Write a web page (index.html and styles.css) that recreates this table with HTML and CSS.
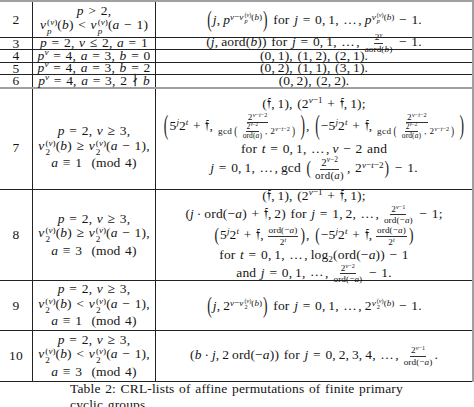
FILE: index.html
```html
<!DOCTYPE html>
<html>
<head>
<meta charset="utf-8">
<link rel="stylesheet" href="styles.css">
</head>
<body>
<div class="table">
  <div class="row r2">
    <div class="num">2</div>
    <div class="cond">
      <div class="ln"><i>p</i> &gt; 2,</div>
      <div class="ln"><i>ν</i><span class="st"><span>(<i>v</i>)</span><span><i>p</i></span></span>(<i>b</i>) &lt; <i>ν</i><span class="st"><span>(<i>v</i>)</span><span><i>p</i></span></span>(<i>a</i> − 1)</div>
    </div>
    <div class="list">
      <div class="ln"><span class="bp b18">(</span><i>j</i>,&thinsp;<i>p</i><span class="sp"><i>v</i>−<i>ν</i><span class="st"><span>(<i>v</i>)</span><span><i>p</i></span></span>(<i>b</i>)</span><span class="bp b18">)</span> for <i>j</i> = 0,&thinsp;1,&thinsp;<span class="el">…</span>,&thinsp;<i>p</i><span class="sp"><i>ν</i><span class="st"><span>(<i>v</i>)</span><span><i>p</i></span></span>(<i>b</i>)</span> − 1.</div>
    </div>
  </div>
  <div class="row r3 sm">
    <div class="num">3</div>
    <div class="cond"><div class="ln"><i>p</i> = 2, <i>v</i> ≤ 2, <i>a</i> = 1</div></div>
    <div class="list"><div class="ln">(<i>j</i>,&thinsp;aord(<i>b</i>)) for <i>j</i> = 0,&thinsp;1,&thinsp;<span class="el">…</span>,&thinsp;<span class="fr"><span class="n">2<span class="sp"><i>v</i></span></span><span class="d">aord(<i>b</i>)</span></span> − 1.</div></div>
  </div>
  <div class="row r4 sm">
    <div class="num">4</div>
    <div class="cond"><div class="ln"><i>p</i><span class="sp"><i>v</i></span> = 4, <i>a</i> = 3, <i>b</i> = 0</div></div>
    <div class="list"><div class="ln">(0,&thinsp;1), (1,&thinsp;2), (2,&thinsp;1).</div></div>
  </div>
  <div class="row r5 sm">
    <div class="num">5</div>
    <div class="cond"><div class="ln"><i>p</i><span class="sp"><i>v</i></span> = 4, <i>a</i> = 3, <i>b</i> = 2</div></div>
    <div class="list"><div class="ln">(0,&thinsp;2), (1,&thinsp;1), (3,&thinsp;1).</div></div>
  </div>
  <div class="row r6 sm">
    <div class="num">6</div>
    <div class="cond"><div class="ln"><i>p</i><span class="sp"><i>v</i></span> = 4, <i>a</i> = 3, 2 ∤ <i>b</i></div></div>
    <div class="list"><div class="ln">(0,&thinsp;2), (2,&thinsp;2).</div></div>
  </div>
  <div class="row r7">
    <div class="num shift">7</div>
    <div class="cond shift">
      <div class="ln"><i>p</i> = 2, <i>v</i> ≥ 3,</div>
      <div class="ln"><i>ν</i><span class="st"><span>(<i>v</i>)</span><span>2</span></span>(<i>b</i>) ≥ <i>ν</i><span class="st"><span>(<i>v</i>)</span><span>2</span></span>(<i>a</i> − 1),</div>
      <div class="ln"><i>a</i> ≡ 1 &nbsp;(mod 4)</div>
    </div>
    <div class="list">
      <div class="ln l14">(𝔣,&thinsp;1), (2<span class="sp"><i>v</i>−1</span> + 𝔣,&thinsp;1);</div>
      <div class="ln l30"><span class="bp b20">(</span>5<span class="sp"><i>j</i></span>2<span class="sp"><i>t</i></span> + 𝔣,&thinsp;<span class="fr wide"><span class="n">2<span class="sp"><i>v</i>−<i>t</i>−2</span></span><span class="d">gcd<span class="bp b13">(</span><span class="fr in"><span class="n">2<span class="sp"><i>v</i>−2</span></span><span class="d">ord(<i>a</i>)</span></span>,&nbsp;2<span class="sp"><i>v</i>−<i>t</i>−2</span><span class="bp b13">)</span></span></span><span class="bp b20">)</span>, <span class="bp b20">(</span>−5<span class="sp"><i>j</i></span>2<span class="sp"><i>t</i></span> + 𝔣,&thinsp;<span class="fr wide"><span class="n">2<span class="sp"><i>v</i>−<i>t</i>−2</span></span><span class="d">gcd<span class="bp b13">(</span><span class="fr in"><span class="n">2<span class="sp"><i>v</i>−2</span></span><span class="d">ord(<i>a</i>)</span></span>,&nbsp;2<span class="sp"><i>v</i>−<i>t</i>−2</span><span class="bp b13">)</span></span></span><span class="bp b20">)</span></div>
      <div class="ln l16">for <i>t</i> = 0,&thinsp;1,&thinsp;<span class="el">…</span>,&thinsp;<i>v</i> − 2 and</div>
      <div class="ln l20"><i>j</i> = 0,&thinsp;1,&thinsp;<span class="el">…</span>,&thinsp;gcd <span class="bp b15">(</span><span class="fr big"><span class="n">2<span class="sp"><i>v</i>−2</span></span><span class="d">ord(<i>a</i>)</span></span>, 2<span class="sp"><i>v</i>−<i>t</i>−2</span><span class="bp b15">)</span> − 1.</div>
    </div>
  </div>
  <div class="row r8">
    <div class="num">8</div>
    <div class="cond">
      <div class="ln"><i>p</i> = 2, <i>v</i> ≥ 3,</div>
      <div class="ln"><i>ν</i><span class="st"><span>(<i>v</i>)</span><span>2</span></span>(<i>b</i>) ≥ <i>ν</i><span class="st"><span>(<i>v</i>)</span><span>2</span></span>(<i>a</i> − 1),</div>
      <div class="ln"><i>a</i> ≡ 3 &nbsp;(mod 4)</div>
    </div>
    <div class="list">
      <div class="ln l16 first">(𝔣,&thinsp;1), (2<span class="sp"><i>v</i>−1</span> + 𝔣,&thinsp;1);</div>
      <div class="ln l18">(<i>j</i>&thinsp;·&thinsp;ord(−<i>a</i>) + 𝔣,&thinsp;2) for <i>j</i> = 1,&thinsp;2,&thinsp;<span class="el">…</span>,&thinsp;<span class="fr"><span class="n">2<span class="sp"><i>v</i>−1</span></span><span class="d">ord(−<i>a</i>)</span></span> − 1;</div>
      <div class="ln l18"><span class="bp b15">(</span>5<span class="sp"><i>j</i></span>2<span class="sp"><i>t</i></span> + 𝔣,&thinsp;<span class="fr"><span class="n">ord(−<i>a</i>)</span><span class="d">2<span class="sp"><i>t</i></span></span></span><span class="bp b15">)</span>, <span class="bp b15">(</span>−5<span class="sp"><i>j</i></span>2<span class="sp"><i>t</i></span> + 𝔣,&thinsp;<span class="fr"><span class="n">ord(−<i>a</i>)</span><span class="d">2<span class="sp"><i>t</i></span></span></span><span class="bp b15">)</span></div>
      <div class="ln l16">for <i>t</i> = 0,&thinsp;1,&thinsp;<span class="el">…</span>,&thinsp;log<span class="sb">2</span>(ord(−<i>a</i>)) − 1</div>
      <div class="ln l16">and <i>j</i> = 0,&thinsp;1,&thinsp;<span class="el">…</span>,&thinsp;<span class="fr"><span class="n">2<span class="sp"><i>v</i>−2</span></span><span class="d">ord(−<i>a</i>)</span></span> − 1.</div>
    </div>
  </div>
  <div class="row r9">
    <div class="num">9</div>
    <div class="cond">
      <div class="ln"><i>p</i> = 2, <i>v</i> ≥ 3,</div>
      <div class="ln"><i>ν</i><span class="st"><span>(<i>v</i>)</span><span>2</span></span>(<i>b</i>) &lt; <i>ν</i><span class="st"><span>(<i>v</i>)</span><span>2</span></span>(<i>a</i> − 1),</div>
      <div class="ln"><i>a</i> ≡ 1 &nbsp;(mod 4)</div>
    </div>
    <div class="list">
      <div class="ln"><span class="bp b18">(</span><i>j</i>,&thinsp;2<span class="sp"><i>v</i>−<i>ν</i><span class="st"><span>(<i>v</i>)</span><span>2</span></span>(<i>b</i>)</span><span class="bp b18">)</span> for <i>j</i> = 0,&thinsp;1,&thinsp;<span class="el">…</span>,&thinsp;2<span class="sp"><i>ν</i><span class="st"><span>(<i>v</i>)</span><span>2</span></span>(<i>b</i>)</span> − 1.</div>
    </div>
  </div>
  <div class="row r10">
    <div class="num">10</div>
    <div class="cond">
      <div class="ln"><i>p</i> = 2, <i>v</i> ≥ 3,</div>
      <div class="ln"><i>ν</i><span class="st"><span>(<i>v</i>)</span><span>2</span></span>(<i>b</i>) &lt; <i>ν</i><span class="st"><span>(<i>v</i>)</span><span>2</span></span>(<i>a</i> − 1),</div>
      <div class="ln"><i>a</i> ≡ 3 &nbsp;(mod 4)</div>
    </div>
    <div class="list">
      <div class="ln">(<i>b</i>&thinsp;·&thinsp;<i>j</i>,&thinsp;2&thinsp;ord(−<i>a</i>)) for <i>j</i> = 0,&thinsp;2,&thinsp;3,&thinsp;4,&thinsp;<span class="el">…</span>,&thinsp;<span class="fr"><span class="n">2<span class="sp"><i>v</i>−1</span></span><span class="d">ord(−<i>a</i>)</span></span>.</div>
    </div>
  </div>
</div>
<p class="caption">Table 2: CRL-lists of affine permutations of finite primary<br>cyclic groups.</p>
</body>
</html>
```
FILE: styles.css
```css
html, body {
  margin: 0;
  padding: 0;
  background: #ffffff;
}
body {
  width: 474px;
  height: 407px;
  overflow: hidden;
  font-family: "Liberation Serif", "Tinos", "Noto Serif", "DejaVu Serif", serif;
  font-size: 13.5px;
  color: #151515;
  word-spacing: 1.1px;
  letter-spacing: 0.15px;
}
i { font-style: italic; }

.table {
  width: 472px;
  border-top: 2px solid #a0a0a0;
  border-right: 2px solid #a0a0a0;
  box-sizing: content-box;
}
.row {
  display: grid;
  grid-template-columns: 33px 123px 1fr;
  grid-template-rows: minmax(0, 1fr);
  border-bottom: 1px solid #222;
  box-sizing: border-box;
}
.row > div {
  display: flex;
  flex-direction: column;
  justify-content: center;
  align-items: center;
  white-space: nowrap;
  min-height: 0;
}
.num, .cond { border-right: 1px solid #222; }
.cond .ln { line-height: 14.5px; }
.ln { line-height: 12px; }
.sm .ln { line-height: 12px; margin-top: -1px; }

.r2 { height: 36px; }
.r3 { height: 12px; }
.r4 { height: 13px; }
.r5 { height: 12px; }
.r6 { height: 14px; border-bottom: 2px solid #a0a0a0; }
.r7 { height: 101px; }
.r8 { height: 91px; }
.r9 { height: 50px; }
.r10 { height: 51px; }

.shift { padding-top: 17px; }

.l14 { line-height: 14px; }
.l16 { line-height: 16px; }
.l18 { line-height: 18px; }
.l20 { line-height: 20px; }
.l30 { line-height: 30px; }
.first { padding-top: 2px; }

.el { margin: 0 0.12em; letter-spacing: 0; }

.sp {
  font-size: 0.68em;
  vertical-align: 0.5em;
  line-height: 0;
  letter-spacing: 0;
  word-spacing: 0;
}
.sb {
  font-size: 0.68em;
  vertical-align: -0.3em;
  line-height: 0;
}
.st {
  display: inline-flex;
  flex-direction: column;
  font-size: 0.68em;
  line-height: 0.95;
  vertical-align: 0.45em;
  letter-spacing: 0;
  margin-left: 1px;
}
.fr {
  display: inline-flex;
  flex-direction: column;
  align-items: center;
  vertical-align: middle;
  font-size: 0.68em;
  line-height: 1.1;
  letter-spacing: 0.1px;
  word-spacing: 0;
  margin: 0 1px;
}
.fr.wide { letter-spacing: 0.35px; }
.fr.in { font-size: 0.82em; margin: 0 2px; }
.fr.big { font-size: 0.8em; letter-spacing: 0.3px; margin: 0 2px; }
.fr > .n {
  border-bottom: 1px solid #333;
  padding: 0 1px;
  text-align: center;
}
.fr > .d {
  padding: 0 1px;
  text-align: center;
}
.bp {
  display: inline-block;
  line-height: 1;
  font-weight: normal;
  margin: 0 1px;
}
.b13 { transform: scaleY(1.4); margin: 0 2px; }
.b15 { transform: scaleY(1.45); }
.b18 { transform: scaleY(1.7); }
.b20 { transform: scaleY(1.95); }

.caption {
  margin: -1px 0 0 70px;
  font-size: 13.5px;
  line-height: 16px;
  letter-spacing: 0.15px;
}
```
